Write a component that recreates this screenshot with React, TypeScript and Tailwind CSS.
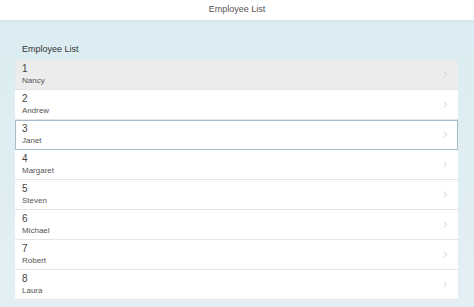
import { ChevronRight } from 'lucide-react';

const employees = ['Nancy', 'Andrew', 'Janet', 'Margaret', 'Steven', 'Michael', 'Robert', 'Laura'];

export default function App() {
    return (
        <div className="w-[474px] h-[307px] overflow-hidden flex flex-col bg-white text-[#333] font-['Liberation_Sans',Arial,sans-serif]">
            {/* Header */}
            <div className="h-[20px] shrink-0 flex items-center justify-center text-[9px] text-[#555] bg-white shadow-[0_1px_2px_rgba(0,0,0,0.08)] z-10">
                Employee List
            </div>

            {/* Page */}
            <div className="flex-1 bg-gradient-to-b from-[#dbedf2] to-[#e3eff4] px-[15px] pt-[19px] pr-[16px]">
                <div className="h-[21px] pl-[7px] flex items-center text-[9px] text-[#333]">Employee List</div>
                <div className="bg-white">
                    {employees.map((name, i) => (
                        <div
                            key={name}
                            className={`h-[30px] flex items-center pl-[7px] pr-[8px] border-b border-[#e5e5e5] ${
                                i === 0 ? 'bg-[#ececec]' : ''
                            } ${i === 2 ? 'outline outline-1 outline-[#a6bccb] -outline-offset-1' : ''}`}
                        >
                            <div className="flex-1 flex flex-col leading-none">
                                <span className="text-[10px] text-[#444]">{i + 1}</span>
                                <span className="text-[8px] text-[#555] mt-[3px]">{name}</span>
                            </div>
                            <ChevronRight size={9} strokeWidth={1.5} className="text-[#aaa]" />
                        </div>
                    ))}
                </div>
            </div>
        </div>
    );
}
